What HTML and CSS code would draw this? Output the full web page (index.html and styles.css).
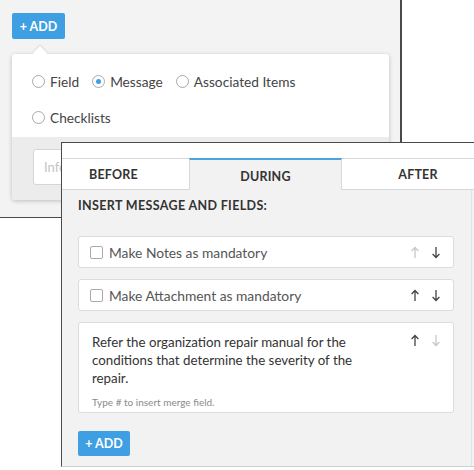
FILE: index.html
```html
<!DOCTYPE html>
<html>
<head>
<meta charset="utf-8">
<link rel="stylesheet" href="styles.css">
</head>
<body>
<div class="stage">
  <div class="back">
    <button class="add-btn">+ ADD</button>
    <div class="popover">
      <div class="pop-options">
        <div class="radio-row">
          <label class="radio"><span class="dot"></span>Field</label>
          <label class="radio"><span class="dot on"></span>Message</label>
          <label class="radio"><span class="dot"></span>Associated Items</label>
        </div>
        <div class="radio-row">
          <label class="radio"><span class="dot"></span>Checklists</label>
        </div>
      </div>
      <div class="pop-foot">
        <div class="pop-input">Info</div>
      </div>
    </div>
  </div>

  <div class="front">
    <div class="tabbar">
      <div class="tab tab-before">BEFORE</div>
      <div class="tab tab-active">DURING</div>
      <div class="tab tab-after">AFTER</div>
    </div>
    <div class="content">
      <div class="heading">INSERT MESSAGE AND FIELDS:</div>
      <div class="item">
        <span class="check"></span>
        <span class="item-label">Make Notes as mandatory</span>
        <span class="arrows">
          <svg class="arr off" viewBox="0 0 10 13"><path d="M5 12V1.5M1.6 5L5 1.5L8.4 5"/></svg>
          <svg class="arr" viewBox="0 0 10 13"><path d="M5 1v10.5M1.6 8L5 11.5L8.4 8"/></svg>
        </span>
      </div>
      <div class="item">
        <span class="check"></span>
        <span class="item-label">Make Attachment as mandatory</span>
        <span class="arrows">
          <svg class="arr" viewBox="0 0 10 13"><path d="M5 12V1.5M1.6 5L5 1.5L8.4 5"/></svg>
          <svg class="arr" viewBox="0 0 10 13"><path d="M5 1v10.5M1.6 8L5 11.5L8.4 8"/></svg>
        </span>
      </div>
      <div class="item message">
        <div class="msg-body">
          <p class="msg-text">Refer the organization repair manual for the conditions that determine the severity of the repair.</p>
          <p class="msg-hint">Type # to insert merge field.</p>
        </div>
        <span class="arrows">
          <svg class="arr" viewBox="0 0 10 13"><path d="M5 12V1.5M1.6 5L5 1.5L8.4 5"/></svg>
          <svg class="arr off" viewBox="0 0 10 13"><path d="M5 1v10.5M1.6 8L5 11.5L8.4 8"/></svg>
        </span>
      </div>
      <button class="add-btn add-bottom">+ ADD</button>
    </div>
  </div>
</div>
</body>
</html>
```

FILE: styles.css
```css
* { box-sizing: border-box; }
html, body { margin: 0; padding: 0; background: #fff; }
body { font-family: Lato, "Open Sans", "Liberation Sans", sans-serif; color: #333; }

.stage { position: relative; width: 474px; height: 470px; overflow: hidden; background: #fff; }

.back {
  width: 402px; height: 218px;
  background: #f3f3f3;
  border-right: 2px solid #4a4a4a;
  border-bottom: 1px solid #4a4a4a;
  padding: 13px 0 0 12px;
}

.add-btn {
  display: block;
  width: 53px; height: 26px;
  border: none; border-radius: 2px;
  background: #3f9fe3;
  color: #fff;
  font-family: Lato, "Open Sans", "Liberation Sans", sans-serif;
  font-weight: 700; font-size: 12.5px;
  padding: 0; cursor: pointer;
}

.popover {
  position: relative;
  margin-top: 15px;
  width: 377px;
  background: #fff;
  border-radius: 3px;
  box-shadow: 0 1px 4px rgba(0,0,0,0.22);
}
.popover::before {
  content: ""; position: absolute; left: 23px; top: -6px;
  width: 10px; height: 10px; background: #fff;
  transform: rotate(45deg);
  box-shadow: -1px -1px 2px rgba(0,0,0,0.1);
}
.pop-options { position: relative; padding: 18px 0 0 20px; height: 83px; }
.radio-row { display: flex; gap: 13px; height: 18px; align-items: center; margin-bottom: 18px; }
.radio { display: flex; align-items: center; gap: 5px; font-size: 13.7px; color: #444; }
.dot {
  width: 13px; height: 13px; border-radius: 50%;
  border: 1px solid #a9a9a9; background: #fff; position: relative;
}
.dot.on::after {
  content: ""; position: absolute; left: 3px; top: 3px;
  width: 5px; height: 5px; border-radius: 50%; background: #3f9fe3;
}
.pop-foot {
  background: #ececec; height: 63px; padding: 12px 0 0 21px;
  border-radius: 0 0 3px 3px;
}
.pop-input {
  width: 340px; height: 36px; background: #fff;
  border: 1px solid #d6d6d6; border-radius: 3px;
  font-size: 13px; color: #c4c4c4; padding: 9px 0 0 10px;
}

.front {
  position: absolute; left: 61px; top: 142px;
  width: 413px; height: 325px;
  background: #f2f2f2;
  border-left: 1px solid #4a4a4a;
  border-top: 1px solid #4a4a4a;
  border-bottom: 1px solid #cfcfcf;
  overflow: hidden;
}
.tabbar {
  background: #fff;
  padding-top: 15px;
  display: grid;
  grid-template-columns: 127px 153px 1fr;
}
.tab {
  height: 32px;
  border-top: 1px solid #d8d8d8;
  border-bottom: 1px solid #d8d8d8;
  font-size: 12.5px; font-weight: 700; color: #333;
  letter-spacing: 0.2px;
  display: flex; align-items: center; justify-content: center;
  background: #fff;
}
.tab-before { padding-right: 24px; }
.tab-active {
  background: #f2f2f2;
  border-top: 2px solid #4aa3df;
  border-bottom: none;
  border-left: 1px solid #d8d8d8;
  border-right: 1px solid #d8d8d8;
  padding-top: 2px;
}
.tab-after { padding-left: 20px; }

.content {
  padding: 9px 17px 0 16px;
  border-right: 1px solid #e2e2e2;
  margin-right: 2px;
  height: 100%;
}
.heading { font-size: 12.5px; font-weight: 700; color: #333; line-height: 14px; letter-spacing: 0.35px; margin-bottom: 23px; }

.item {
  display: flex; align-items: center;
  background: #fff;
  border: 1px solid #dcdcdc; border-radius: 3px;
  height: 32px; padding: 0 12px 0 11px;
  margin-bottom: 11px;
}
.check {
  width: 13px; height: 13px; border: 1px solid #aaa; border-radius: 2px;
  background: #fff; margin-right: 6px; flex: none;
}
.item-label { font-size: 13.8px; color: #555; flex: 1; }
.arrows { display: flex; gap: 11px; flex: none; }
.arr { width: 10px; height: 13px; fill: none; stroke: #444; stroke-width: 1.3; }
.arr.off { stroke: #c8c8c8; }

.item.message { height: 91px; align-items: flex-start; padding: 10px 12px 0 13px; margin-bottom: 18px; }
.item.message .arrows { margin-top: 1px; }
.msg-body { flex: 1; }
.msg-text { margin: 0; font-size: 13.3px; line-height: 18px; color: #333; max-width: 275px; }
.msg-hint { margin: 9px 0 0; font-size: 10px; color: #8a8a8a; }

.add-bottom { width: 52px; height: 25px; }
```
